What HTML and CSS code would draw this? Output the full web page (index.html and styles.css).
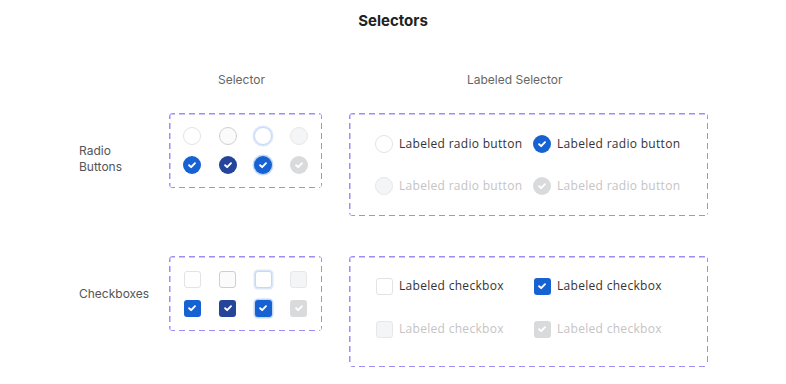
FILE: index.html
```html
<!DOCTYPE html>
<html lang="en">
<head>
    <meta charset="UTF-8">
    <meta name="viewport" content="width=device-width, initial-scale=1.0">
    <title>Selectors</title>
    <link rel="stylesheet" href="styles.css">
</head>
<body>
    <div class="page">
        <h1 class="title">Selectors</h1>

        <div class="sheet">
            <div></div>
            <div class="col-head head-selector">Selector</div>
            <div class="col-head head-labeled">Labeled Selector</div>

            <!-- Radio buttons -->
            <div class="row-label">Radio<br>Buttons</div>
            <div class="box selector-box">
                <span class="ctl radio"></span>
                <span class="ctl radio hover"></span>
                <span class="ctl radio focus"></span>
                <span class="ctl radio disabled"></span>
                <span class="ctl radio checked"><svg viewBox="0 0 10 10"><path d="M2.6 5.2 4.3 6.8 7.5 3.5"/></svg></span>
                <span class="ctl radio checked hover"><svg viewBox="0 0 10 10"><path d="M2.6 5.2 4.3 6.8 7.5 3.5"/></svg></span>
                <span class="ctl radio checked focus"><svg viewBox="0 0 10 10"><path d="M2.6 5.2 4.3 6.8 7.5 3.5"/></svg></span>
                <span class="ctl radio checked disabled"><svg viewBox="0 0 10 10"><path d="M2.6 5.2 4.3 6.8 7.5 3.5"/></svg></span>
            </div>
            <div class="box labeled-box radios">
                <label class="item"><span class="ctl radio"></span>Labeled radio button</label>
                <label class="item"><span class="ctl radio checked"><svg viewBox="0 0 10 10"><path d="M2.6 5.2 4.3 6.8 7.5 3.5"/></svg></span>Labeled radio button</label>
                <label class="item off"><span class="ctl radio disabled"></span>Labeled radio button</label>
                <label class="item off"><span class="ctl radio checked disabled"><svg viewBox="0 0 10 10"><path d="M2.6 5.2 4.3 6.8 7.5 3.5"/></svg></span>Labeled radio button</label>
            </div>

            <!-- Checkboxes -->
            <div class="row-label second">Checkboxes</div>
            <div class="box selector-box second">
                <span class="ctl check"></span>
                <span class="ctl check hover"></span>
                <span class="ctl check focus"></span>
                <span class="ctl check disabled"></span>
                <span class="ctl check checked"><svg viewBox="0 0 10 10"><path d="M2.6 5.2 4.3 6.8 7.5 3.5"/></svg></span>
                <span class="ctl check checked hover"><svg viewBox="0 0 10 10"><path d="M2.6 5.2 4.3 6.8 7.5 3.5"/></svg></span>
                <span class="ctl check checked focus"><svg viewBox="0 0 10 10"><path d="M2.6 5.2 4.3 6.8 7.5 3.5"/></svg></span>
                <span class="ctl check checked disabled"><svg viewBox="0 0 10 10"><path d="M2.6 5.2 4.3 6.8 7.5 3.5"/></svg></span>
            </div>
            <div class="box labeled-box checks second">
                <label class="item"><span class="ctl check"></span>Labeled checkbox</label>
                <label class="item"><span class="ctl check checked"><svg viewBox="0 0 10 10"><path d="M2.6 5.2 4.3 6.8 7.5 3.5"/></svg></span>Labeled checkbox</label>
                <label class="item off"><span class="ctl check disabled"></span>Labeled checkbox</label>
                <label class="item off"><span class="ctl check checked disabled"><svg viewBox="0 0 10 10"><path d="M2.6 5.2 4.3 6.8 7.5 3.5"/></svg></span>Labeled checkbox</label>
            </div>
        </div>
    </div>
</body>
</html>
```

FILE: styles.css
```css
body {
    margin: 0;
    background: #fff;
    font-family: Inter, "Liberation Sans", sans-serif;
    color: #333;
}

.page {
    padding-top: 11px;
}

.title {
    margin: 0;
    text-align: center;
    font-size: 15px;
    line-height: 20px;
    font-weight: 700;
    color: #222;
}

.sheet {
    display: grid;
    grid-template-columns: 90px 180px 359px;
    align-items: start;
    padding-left: 79px;
    margin-top: 41px;
}

.col-head {
    font-size: 12px;
    line-height: 16px;
    color: #666;
    margin-bottom: 25px;
}

.head-selector {
    padding-left: 49px;
}

.head-labeled {
    padding-left: 118px;
}

.row-label {
    font-size: 12px;
    line-height: 16px;
    color: #555;
    padding-top: 30px;
}

.second {
    margin-top: 40px;
}

/* dashed frame drawn with gradients so the dash length matches */
.box {
    --dash: #a18cf6;
    box-sizing: border-box;
    border-radius: 4px;
    background:
        repeating-linear-gradient(90deg, var(--dash) 0 6px, transparent 6px 10px) top left / 100% 1.5px no-repeat,
        repeating-linear-gradient(90deg, var(--dash) 0 6px, transparent 6px 10px) bottom left / 100% 1.5px no-repeat,
        repeating-linear-gradient(180deg, var(--dash) 0 6px, transparent 6px 10px) top left / 1.5px 100% no-repeat,
        repeating-linear-gradient(180deg, var(--dash) 0 6px, transparent 6px 10px) top right / 1.5px 100% no-repeat;
}

.selector-box {
    width: 153px;
    height: 75px;
    display: grid;
    grid-template-columns: repeat(4, 18px);
    align-content: start;
    column-gap: 17.5px;
    row-gap: 11px;
    padding: 14px 0 0 14px;
}

.labeled-box {
    width: 359px;
    display: grid;
    grid-template-columns: 158px auto;
    align-content: start;
    row-gap: 24px;
    padding: 22px 0 0 26px;
}

.labeled-box.radios {
    height: 103px;
}

.labeled-box.checks {
    height: 111px;
    padding-top: 21px;
    row-gap: 25px;
}

.item {
    display: flex;
    align-items: center;
    gap: 6px;
    font-family: "Open Sans", sans-serif;
    font-size: 12px;
    letter-spacing: 0.3px;
    line-height: 18px;
    color: #333;
    white-space: nowrap;
}

.item.off {
    color: #c4c4c4;
}

/* controls */
.ctl {
    width: 18px;
    height: 18px;
    box-sizing: border-box;
    border: 1px solid #e3e3e3;
    background: #fff;
    display: flex;
    align-items: center;
    justify-content: center;
    flex-shrink: 0;
}

.radio {
    border-radius: 50%;
}

.check {
    width: 17px;
    height: 17px;
    border-radius: 3px;
    margin: 0.5px;
}

.ctl.hover {
    border-color: #cfcfcf;
    background: #fbfbfb;
}

.ctl.focus {
    border-color: #c9d8f2;
    box-shadow: 0 0 0 1.5px #dce7fa;
}

.ctl.disabled {
    border-color: #e6e7e8;
    background: #f4f5f6;
}

.ctl.checked {
    border: none;
    background: #1762d2;
}

.ctl.checked.hover {
    background: #25459b;
}

.ctl.checked.focus {
    box-shadow: 0 0 0 1.5px #c6d8f7;
}

.ctl.checked.disabled {
    background: #d9dadb;
}

.ctl svg {
    width: 12px;
    height: 12px;
    fill: none;
    stroke: #fff;
    stroke-width: 1.6;
    stroke-linecap: round;
    stroke-linejoin: round;
}
```
